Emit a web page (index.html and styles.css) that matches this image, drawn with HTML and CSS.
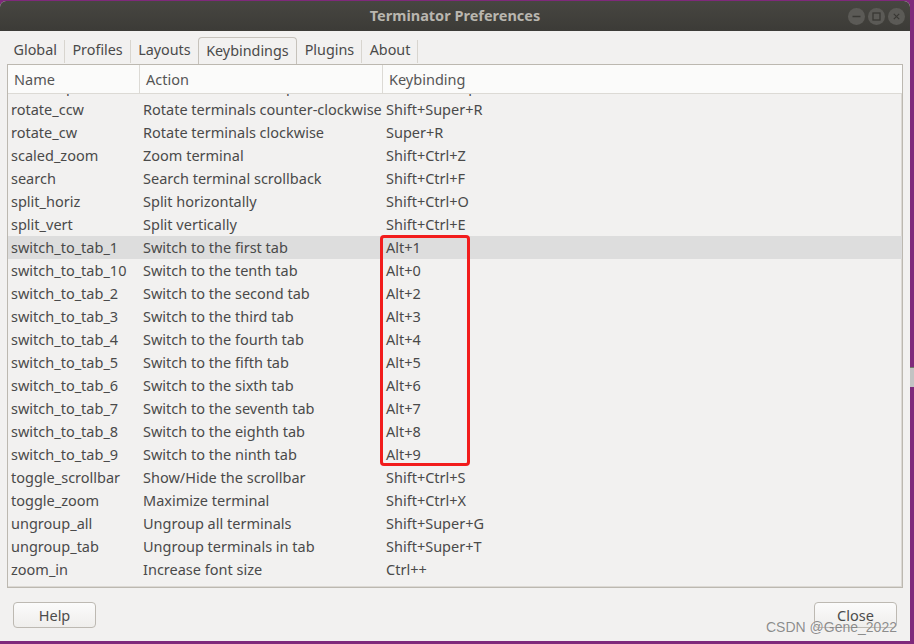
FILE: index.html
```html
<!DOCTYPE html>
<html>
<head>
<meta charset="utf-8">
<title>Terminator Preferences</title>
<link rel="stylesheet" href="styles.css">
</head>
<body>
<div class="window">
  <div class="titlebar">
    <div></div>
    <div class="title">Terminator Preferences</div>
    <div class="wbtns">
      <span class="wbtn"><svg width="17" height="17" viewBox="0 0 17 17"><line x1="4.5" y1="8.5" x2="12.5" y2="8.5" stroke="#393834" stroke-width="1.3"/></svg></span>
      <span class="wbtn"><svg width="17" height="17" viewBox="0 0 17 17"><rect x="5" y="5" width="7" height="7" fill="none" stroke="#393834" stroke-width="1.3"/></svg></span>
      <span class="wbtn"><svg width="17" height="17" viewBox="0 0 17 17"><path d="M5.8 5.8 L11.2 11.2 M11.2 5.8 L5.8 11.2" stroke="#393834" stroke-width="1.2"/></svg></span>
    </div>
  </div>
  <div class="content">
    <div class="tabs">
      <div class="tab">Global</div><div class="sep"></div>
      <div class="tab">Profiles</div><div class="sep"></div>
      <div class="tab">Layouts</div>
      <div class="tab active">Keybindings</div>
      <div class="tab">Plugins</div><div class="sep"></div>
      <div class="tab">About</div><div class="sep"></div>
    </div>
    <div class="frame">
      <div class="thead">
        <div class="th">Name</div>
        <div class="th colsep">Action</div>
        <div class="th colsep">Keybinding</div>
      </div>
      <div class="tbody">
        <div class="row first"><div class="c n">resize_up</div><div class="c">Resize the terminal up</div><div class="c">Shift+Ctrl+Up</div></div>
        <div class="row"><div class="c n">rotate_ccw</div><div class="c">Rotate terminals counter-clockwise</div><div class="c">Shift+Super+R</div></div>
        <div class="row"><div class="c n">rotate_cw</div><div class="c">Rotate terminals clockwise</div><div class="c">Super+R</div></div>
        <div class="row"><div class="c n">scaled_zoom</div><div class="c">Zoom terminal</div><div class="c">Shift+Ctrl+Z</div></div>
        <div class="row"><div class="c n">search</div><div class="c">Search terminal scrollback</div><div class="c">Shift+Ctrl+F</div></div>
        <div class="row"><div class="c n">split_horiz</div><div class="c">Split horizontally</div><div class="c">Shift+Ctrl+O</div></div>
        <div class="row"><div class="c n">split_vert</div><div class="c">Split vertically</div><div class="c">Shift+Ctrl+E</div></div>
        <div class="row selected"><div class="c n">switch_to_tab_1</div><div class="c">Switch to the first tab</div><div class="c">Alt+1</div></div>
        <div class="row"><div class="c n">switch_to_tab_10</div><div class="c">Switch to the tenth tab</div><div class="c">Alt+0</div></div>
        <div class="row"><div class="c n">switch_to_tab_2</div><div class="c">Switch to the second tab</div><div class="c">Alt+2</div></div>
        <div class="row"><div class="c n">switch_to_tab_3</div><div class="c">Switch to the third tab</div><div class="c">Alt+3</div></div>
        <div class="row"><div class="c n">switch_to_tab_4</div><div class="c">Switch to the fourth tab</div><div class="c">Alt+4</div></div>
        <div class="row"><div class="c n">switch_to_tab_5</div><div class="c">Switch to the fifth tab</div><div class="c">Alt+5</div></div>
        <div class="row"><div class="c n">switch_to_tab_6</div><div class="c">Switch to the sixth tab</div><div class="c">Alt+6</div></div>
        <div class="row"><div class="c n">switch_to_tab_7</div><div class="c">Switch to the seventh tab</div><div class="c">Alt+7</div></div>
        <div class="row"><div class="c n">switch_to_tab_8</div><div class="c">Switch to the eighth tab</div><div class="c">Alt+8</div></div>
        <div class="row"><div class="c n">switch_to_tab_9</div><div class="c">Switch to the ninth tab</div><div class="c">Alt+9</div></div>
        <div class="row"><div class="c n">toggle_scrollbar</div><div class="c">Show/Hide the scrollbar</div><div class="c">Shift+Ctrl+S</div></div>
        <div class="row"><div class="c n">toggle_zoom</div><div class="c">Maximize terminal</div><div class="c">Shift+Ctrl+X</div></div>
        <div class="row"><div class="c n">ungroup_all</div><div class="c">Ungroup all terminals</div><div class="c">Shift+Super+G</div></div>
        <div class="row"><div class="c n">ungroup_tab</div><div class="c">Ungroup terminals in tab</div><div class="c">Shift+Super+T</div></div>
        <div class="row"><div class="c n">zoom_in</div><div class="c">Increase font size</div><div class="c">Ctrl++</div></div>
        <div class="row"><div class="c n">zoom_normal</div><div class="c">Restore original font size</div><div class="c">Ctrl+0</div></div>
      </div>
    </div>
    <div class="actions">
      <div class="btn">Help</div>
      <div class="btn">Close</div>
    </div>
  </div>
</div>
<div class="highlight"></div>
<div class="desk-item"></div>
<div class="watermark">CSDN @Gene_2022</div>
</body>
</html>
```

FILE: styles.css
```css
html, body {
  margin: 0;
  padding: 0;
}
body {
  width: 914px;
  height: 644px;
  overflow: hidden;
  position: relative;
  background: #7f297b;
  font-family: "Noto Sans", "Open Sans", sans-serif;
  font-size: 14.5px;
  color: #4a4a4a;
}
.window {
  width: 910px;
  height: 640px;
  margin-top: 1px;
  background: #f2f1f0;
  border-radius: 6px 6px 0 0;
  overflow: hidden;
  display: flex;
  flex-direction: column;
}
.titlebar {
  height: 30px;
  flex: none;
  background: linear-gradient(#474641, #3c3b37);
  display: grid;
  grid-template-columns: 1fr auto 1fr;
  align-items: center;
}
.title {
  font-weight: bold;
  color: #b9b6af;
  font-size: 14.5px;
  margin-top: -2px;
}
.wbtns {
  display: flex;
  justify-content: flex-end;
  gap: 3px;
  padding-right: 5px;
}
.wbtn {
  width: 17px;
  height: 17px;
  border-radius: 50%;
  background: #5b5a56;
  display: flex;
}
.content {
  flex: 1;
  display: flex;
  flex-direction: column;
}
.tabs {
  display: flex;
  height: 27px;
  padding: 6px 0 0 6px;
  flex: none;
  font-size: 14.35px;
}
.tab {
  padding: 0 7px 0 7.5px;
  line-height: 26px;
  height: 26px;
  white-space: nowrap;
}
.tab.active {
  border: 1px solid #c6c2bb;
  border-bottom: none;
  border-radius: 4px 4px 0 0;
  padding: 0 7.5px;
}
.sep {
  width: 1px;
  height: 23px;
  margin-top: 3px;
  background: #d8d5cf;
}
.frame {
  margin: 0 7px;
  height: 524px;
  box-sizing: border-box;
  border: 1px solid #bcb8b0;
  box-shadow: inset -1px -1px 0 #dcd9d4;
  display: flex;
  flex-direction: column;
  overflow: hidden;
  background: #f2f1f0;
}
.thead {
  display: grid;
  grid-template-columns: 131px 243px 1fr;
  height: 29px;
  flex: none;
  box-sizing: border-box;
  background: #fbfbfa;
  border-bottom: 1px solid #dcdad5;
}
.th {
  line-height: 28px;
  padding-left: 6px;
  color: #555;
}
.colsep {
  border-left: 1px solid #dcdad5;
}
.tbody {
  flex: 1;
  overflow: hidden;
}
.row {
  display: grid;
  grid-template-columns: 131px 243px 1fr;
  height: 23px;
  line-height: 23px;
}
.row.first {
  margin-top: -19px;
}
.row.selected {
  background: #dddddd;
}
.c {
  padding-left: 4px;
  white-space: nowrap;
}
.c.n {
  padding-left: 3px;
}
.actions {
  display: flex;
  justify-content: space-between;
  padding: 14px 13px 0;
}
.btn {
  width: 83px;
  height: 26px;
  box-sizing: border-box;
  border: 1px solid #bdb9b2;
  border-radius: 4px;
  background: linear-gradient(#fbfbfb, #efeeec);
  text-align: center;
  line-height: 24px;
  color: #4c4c4c;
}
.highlight {
  position: absolute;
  left: 380px;
  top: 235px;
  width: 90px;
  height: 231px;
  box-sizing: border-box;
  border: 3px solid #f21c1c;
  border-radius: 4px;
}
.desk-item {
  position: absolute;
  left: 910px;
  top: 367px;
  width: 4px;
  height: 19px;
  background: #c3c3c3;
  border-top: 1px solid #6f7b68;
}
.watermark {
  position: absolute;
  left: 766px;
  top: 619px;
  font-family: "Liberation Sans", Arial, sans-serif;
  font-size: 14px;
  line-height: 17px;
  color: rgba(120, 120, 120, 0.85);
  text-shadow: 0 0 1px rgba(255, 255, 255, 0.6);
}
```
